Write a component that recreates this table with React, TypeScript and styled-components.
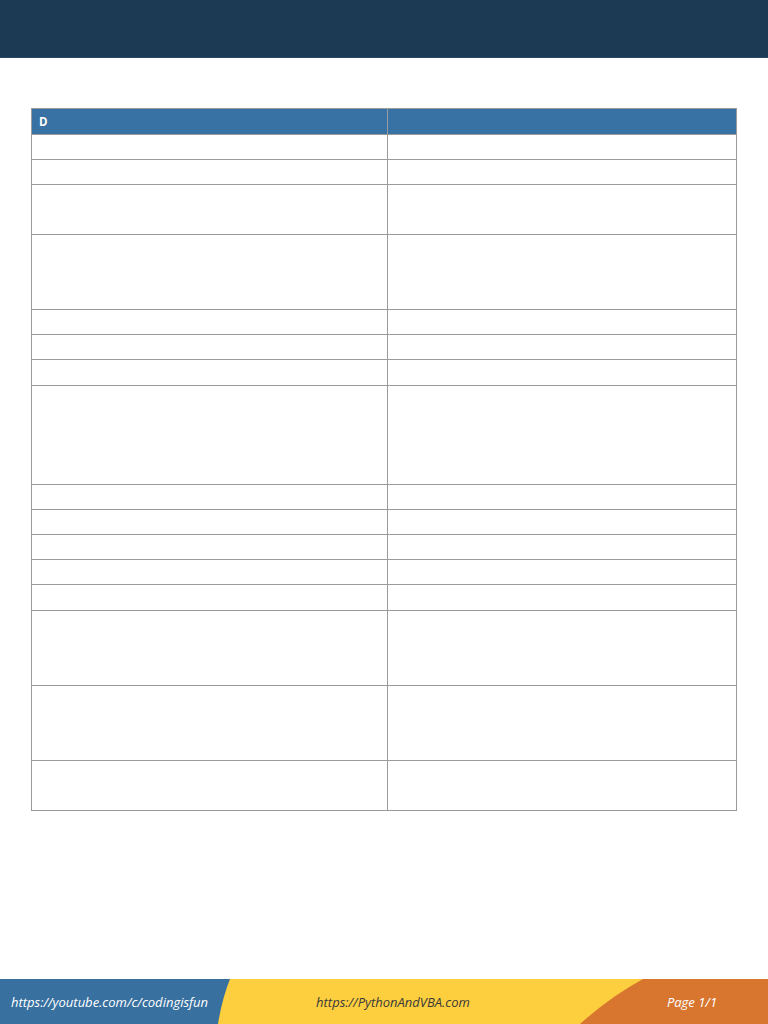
import React from "react";
import styled, { createGlobalStyle } from "styled-components";

const Global = createGlobalStyle`
  html, body { margin: 0; padding: 0; background: #ffffff; }
  body { font-family: "Open Sans", "Liberation Sans", sans-serif; }
`;

const Page = styled.div`
  min-height: 1024px;
  display: flex;
  flex-direction: column;
`;

const TopBar = styled.header`
  height: 58px;
  background: #1d3a54;
  border-bottom: 1px solid #2b4a66;
  box-sizing: border-box;
`;

const Main = styled.main`
  padding: 50px 31px 0 31px;
  flex: 1;
`;

const Table = styled.table`
  width: 705px;
  border-collapse: collapse;
  table-layout: fixed;
  border: 1px solid #9a9a9a;
`;

const HeadCell = styled.th<{ $w: number }>`
  width: ${(p) => p.$w}px;
  height: 26px;
  background: #3871a3;
  color: #ffffff;
  font-family: "Open Sans", "Liberation Sans", sans-serif;
  font-weight: 700;
  font-size: 11.5px;
  text-align: left;
  padding: 0 7px;
  border: 1px solid #9a9a9a;
  box-sizing: border-box;
`;

const Cell = styled.td<{ $h: number }>`
  height: ${(p) => p.$h - 1}px;
  padding: 0;
  border: 1px solid #9a9a9a;
  box-sizing: content-box;
`;

const Footer = styled.footer`
  position: relative;
  height: 45px;
  background: #fdce3e;
`;

const FooterArt = styled.svg`
  position: absolute;
  inset: 0;
  width: 100%;
  height: 100%;
`;

const FooterRow = styled.div`
  position: relative;
  height: 100%;
  display: flex;
  align-items: center;
  font-family: "Open Sans", "Liberation Sans", sans-serif;
  font-style: italic;
  font-size: 13px;
`;

const FooterText = styled.span<{ $color: string; $left: number }>`
  color: ${(p) => p.$color};
  margin-left: ${(p) => p.$left}px;
  white-space: nowrap;
`;

const rows = [25, 25, 50, 75, 25, 25, 26, 99, 25, 25, 25, 25, 26, 75, 75, 50];

export default function App() {
  return (
    <>
      <Global />
      <Page>
        <TopBar />
        <Main>
          <Table>
            <thead>
              <tr>
                <HeadCell $w={356}>D</HeadCell>
                <HeadCell $w={349}></HeadCell>
              </tr>
            </thead>
            <tbody>
              {rows.map((h, i) => (
                <tr key={i}>
                  <Cell $h={h} />
                  <Cell $h={h} />
                </tr>
              ))}
            </tbody>
          </Table>
        </Main>
        <Footer>
          <FooterArt viewBox="0 0 768 45" preserveAspectRatio="none">
            <path d="M0 0 H230 Q222 20 218 45 H0 Z" fill="#3870a0" />
            <path d="M643 0 H768 V45 H580 Q610 18 643 0 Z" fill="#d8762f" />
          </FooterArt>
          <FooterRow>
            <FooterText $color="#ffffff" $left={11}>https://youtube.com/c/codingisfun</FooterText>
            <FooterText $color="#3a3a3a" $left={108}>https://PythonAndVBA.com</FooterText>
            <FooterText $color="#ffffff" $left={197}>Page 1/1</FooterText>
          </FooterRow>
        </Footer>
      </Page>
    </>
  );
}
